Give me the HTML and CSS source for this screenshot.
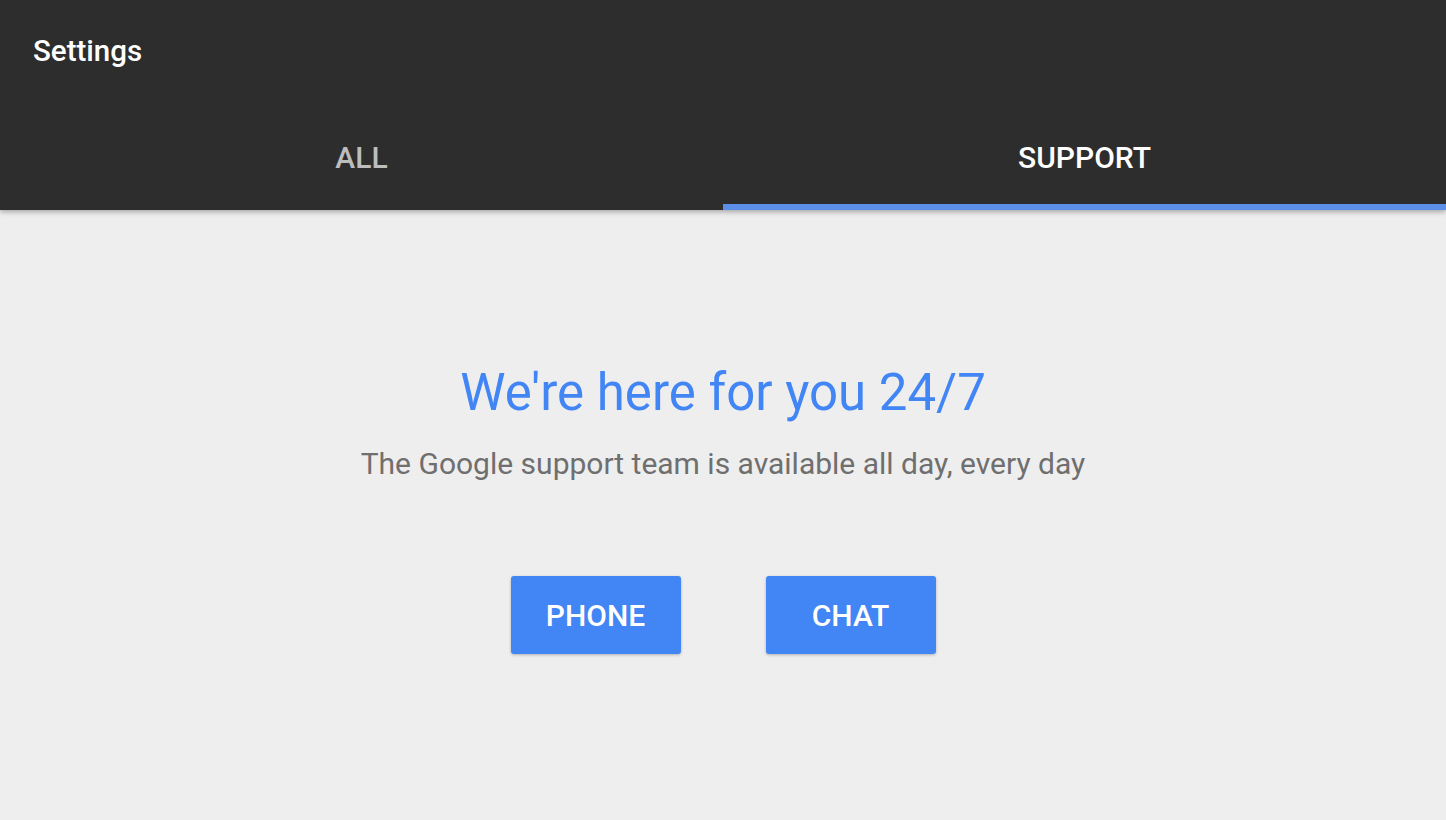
FILE: index.html
```html
<!DOCTYPE html>
<html>
<head>
<meta charset="utf-8">
<link rel="stylesheet" href="styles.css">
</head>
<body>
<header class="appbar">
  <div class="title">Settings</div>
  <nav class="tabs">
    <div class="tab">ALL</div>
    <div class="tab active">SUPPORT</div>
  </nav>
</header>
<main class="content">
  <h1 class="headline">We're here for you 24/7</h1>
  <p class="sub">The Google support team is available all day, every day</p>
  <div class="actions">
    <button class="btn">PHONE</button>
    <button class="btn">CHAT</button>
  </div>
</main>
</body>
</html>
```
FILE: styles.css
```css
* { box-sizing: border-box; }
html, body { margin: 0; height: 100%; }
body {
  font-family: Roboto, "Noto Sans", sans-serif;
  background: #eeeeee;
  overflow: hidden;
}
.appbar {
  background: #2d2d2d;
  height: 210px;
  display: flex;
  flex-direction: column;
  box-shadow: 0 2px 5px rgba(0,0,0,0.3);
  position: relative;
  z-index: 1;
}
.title {
  color: #ffffff;
  font-size: 29.5px;
  font-weight: 500;
  padding: 35px 0 0 33px;
  height: 104px;
  line-height: 32px;
}
.tabs {
  display: flex;
  flex: 1;
}
.tab {
  flex: 1;
  display: flex;
  align-items: center;
  justify-content: center;
  font-size: 30px;
  font-weight: 500;
  color: #bdbdbd;
  padding-top: 6px;
  border-bottom: 6px solid transparent;
}
.tab.active {
  color: #ffffff;
  border-bottom-color: #5b8ee9;
}
.content {
  display: flex;
  flex-direction: column;
  align-items: center;
  padding-top: 153px;
}
.headline {
  margin: 0;
  font-size: 51px;
  font-weight: 400;
  color: #4285f4;
  line-height: 60px;
}
.sub {
  margin: 23px 0 0;
  font-size: 30px;
  color: #6f6f6f;
  line-height: 36px;
}
.actions {
  display: flex;
  gap: 85px;
  margin-top: 94px;
}
.btn {
  width: 170px;
  height: 78px;
  border: none;
  border-radius: 3px;
  background: #4285f4;
  color: #ffffff;
  font-family: Roboto, "Noto Sans", sans-serif;
  font-size: 30px;
  font-weight: 500;
  box-shadow: 0 1px 3px rgba(0,0,0,0.25);
}
```
